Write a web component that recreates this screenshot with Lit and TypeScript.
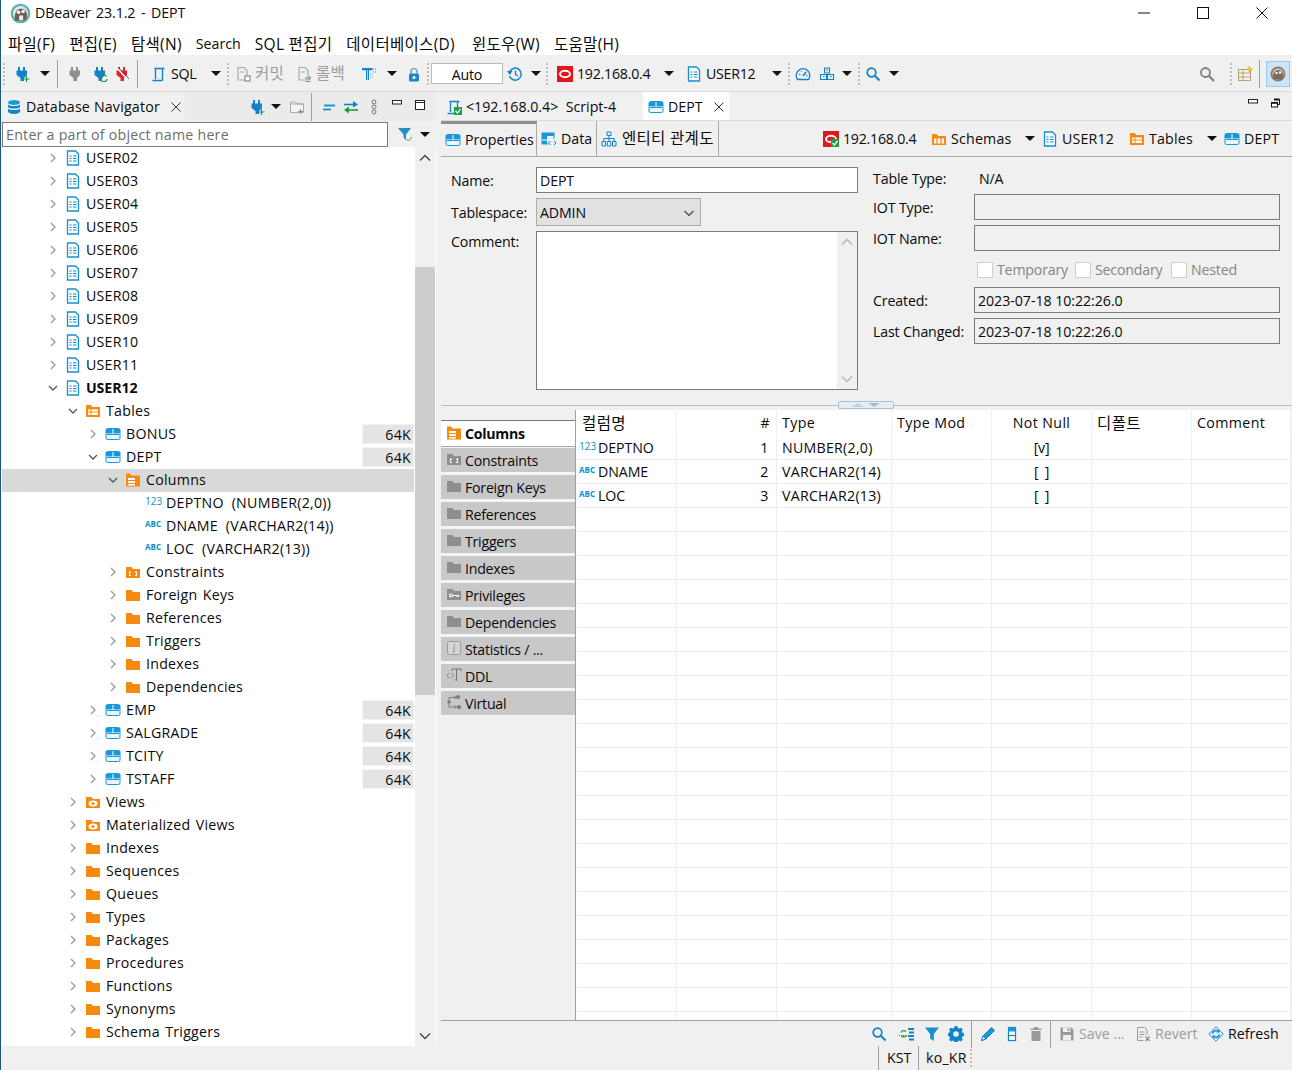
import { LitElement, html, css, svg, nothing } from "lit";
import { customElement } from "lit/decorators.js";

const B = "#1083c9", LB = "#1a97d8", O = "#f58a0f", G = "#1a9e3c", GR = "#8e8e8e", LG = "#a9a9a9";

const plug = (c: string) => svg`<path fill="${c}" d="M4 1h2v3.500h3V1h2v3.500h2V9l-3 3v3H6.500v-3L2.500 9V4.500H4z"/>`;
const ring = (d = "") => svg`<rect x="0" y="0" width="16" height="16" fill="#e2161b"/><ellipse cx="8" cy="8" rx="5" ry="3.200" fill="none" stroke="#fff" stroke-width="2"/>${d ? svg`<rect x="8" y="8" width="8" height="8" fill="#1fa24a"/><path d="M9.500 12l2 2 3-4" fill="none" stroke="#fff" stroke-width="1.300"/>` : nothing}`;
const tableI = svg`<rect x="1" y="2.500" width="14" height="11" rx="1.500" fill="#e8f5fc" stroke="${LB}"/><path fill="${LB}" d="M1 3h14v5H1z"/><path d="M1 8h14M8 3v10" stroke="#fff"/><path d="M1.500 8.500h13" stroke="${LB}"/>`;
const folder = (c: string) => svg`<path fill="${c}" d="M1 3h5.500L8 5h7v9H1z"/>`;
const doc = svg`<path d="M2.500 1h8l3 3v11h-11z" fill="#fff" stroke="#1590d0" stroke-width="1.300"/><path d="M4.500 6h2M4.500 8.500h2M4.500 11h2M8 6h3.500M8 8.500h3.500M8 11h3.500" stroke="${B}" stroke-width="1.100"/>`;
const tablesI = svg`<path fill="${O}" d="M1 2h5l1 2h8v10H1z"/><path d="M3 6.500h10v5.500H3z" fill="#fff"/><path d="M3 9h10M6 6.500V12" stroke="${O}"/>`;
const greyDoc = svg`<path d="M3 1.500h6l3 3V14H3z" fill="none" stroke="${LG}" stroke-width="1.200"/>`;

const ICONS: Record<string, any> = {
  plugAdd: svg`${plug(B)}<path d="M12.500 10v6M9.500 13h6" stroke="${G}" stroke-width="1.200"/>`,
  plugGrey: plug(GR),
  plugSync: svg`${plug(B)}<path d="M9 12a3 3 0 0 1 5.500-1.500M15 13a3 3 0 0 1-5.500 1.500" fill="none" stroke="${G}" stroke-width="1.300"/>`,
  plugRed: svg`${plug("#e3242b")}<path d="M3 2l11 12" stroke="#fff" stroke-width="1.500"/><path d="M4 1l11 12" stroke="#3a3a3a" stroke-width=".8"/>`,
  sql: svg`<path d="M3.500 2.500h10M4.500 2.500V13M11.500 2.500V14.500M1.500 14.500h10" fill="none" stroke="${B}" stroke-width="1.400"/>`,
  sqlOk: svg`<path d="M3.500 2.500h10M4.500 2.500V13M11.500 2.500V14.500M1.500 14.500h10" fill="none" stroke="${B}" stroke-width="1.300"/><rect x="8" y="8" width="8" height="8" fill="#1fa24a"/><path d="M9.500 12l2 2 3-4" fill="none" stroke="#fff" stroke-width="1.200"/>`,
  commit: svg`${greyDoc}<rect x="10" y="10" width="5" height="5" fill="#fff" stroke="#8a8a8a" stroke-width="1.200"/><path d="M5 6h4" stroke="${LG}"/>`,
  rollback: svg`${greyDoc}<path d="M9 12h6M13 10l2 2-2 2M9.500 15.500h5" fill="none" stroke="#8a8a8a"/><path d="M5 6h4" stroke="${LG}"/>`,
  format: svg`<path fill="${B}" d="M2 2h10.500v2.200H9V14H6V4.200H2z"/><path d="M7.500 4v10" stroke="#f0f0f0" stroke-width=".7"/><path d="M13 3h3M13 6h3M10.500 8h2.500M10.500 11h2.500" stroke="${LB}" stroke-dasharray="1 1"/>`,
  lock: svg`<path d="M5 8V5.500a3 3 0 0 1 6 0V8" fill="none" stroke="#8fa3b3" stroke-width="1.600"/><rect x="3" y="7.500" width="10" height="8" rx="1.500" fill="#1f86cc"/><circle cx="8" cy="11.500" r="1.500" fill="#fff"/>`,
  history: svg`<path d="M2.800 5.500A6 6 0 1 1 2.500 10" fill="none" stroke="${B}" stroke-width="1.500"/><path d="M0 5h5.500L2.800 9z" fill="${B}"/><path d="M8.500 4.500V8.500l2.500 1.500" fill="none" stroke="${B}" stroke-width="1.300"/>`,
  oracle: ring(),
  oracleOk: ring("x"),
  doc,
  gauge: svg`<path d="M2.500 13.500a6.800 6.800 0 1 1 11 0z" fill="none" stroke="${B}" stroke-width="1.300"/><path d="M8 10l3-4" stroke="${B}" stroke-width="1.600"/><path d="M4 8.500h1.500M11 9.500h1.500M6 5l.8.800" stroke="${B}"/>`,
  boxes: svg`<path d="M5.500 2h5v5h-5zM1.500 8.500h6v5h-6zM8.500 8.500h6v5h-6zM7 4h2M4 10.500h1.500M11 10.500h1.500" fill="none" stroke="${B}" stroke-width="1.100"/>`,
  search: svg`<circle cx="6.500" cy="6.500" r="4.300" fill="none" stroke="${B}" stroke-width="1.700"/><path d="M9.800 9.800l4.700 4.700" stroke="${B}" stroke-width="2"/>`,
  searchGrey: svg`<circle cx="6.500" cy="6.500" r="4.500" fill="none" stroke="#7f7f7f" stroke-width="1.800"/><path d="M10 10l5 5" stroke="#7f7f7f" stroke-width="2.200"/>`,
  layout: svg`<rect x="1.500" y="3.500" width="12" height="11" fill="#f7f3e8" stroke="#b3a27c"/><path d="M1.500 7h12M6 3.500v11M1.500 11h12" stroke="#b3a27c"/><path d="M12.500 0l1 2.200 2.300 1-2.300 1-1 2.300-1-2.300-2.300-1 2.300-1z" fill="#f2c230" stroke="#d29c10" stroke-width=".4"/>`,
  folderAdd: svg`<path d="M1.500 3h5l1.500 2h6.500v8.500h-13z" fill="#f4f4f4" stroke="${LG}"/><path d="M1.500 5h13" stroke="${LG}"/><path d="M11.500 10v5M9 12.500h5" stroke="${GR}"/>`,
  collapse: svg`<path d="M3 6.500h11" stroke="${LB}" stroke-width="2"/><path d="M2 10.500h8" stroke="${B}" stroke-width="1.600"/>`,
  linkArrows: svg`<path d="M1 5.500h10" stroke="${B}" stroke-width="1.600"/><path d="M10 2l5 3.500-5 3z" fill="${B}"/><path d="M15 11h-10" stroke="${G}" stroke-width="1.600"/><path d="M6 7.500L1 11l5 3.500z" fill="${G}"/>`,
  chain: svg`<circle cx="8" cy="3" r="2" fill="none" stroke="#777"/><circle cx="8" cy="8" r="2" fill="none" stroke="#777"/><circle cx="8" cy="13" r="2" fill="none" stroke="#777"/>`,
  minV: svg`<rect x="3.500" y="1.500" width="9" height="3.500" fill="#fff" stroke="#222"/>`,
  maxV: svg`<rect x="3.500" y="1.500" width="9" height="9" fill="#fff" stroke="#222"/><path d="M3.500 3.500h9" stroke="#222"/>`,
  restore: svg`<path d="M6 1.500h5.500v5H10" fill="none" stroke="#111"/><path d="M6 1.500h5.500" stroke="#111" stroke-width="2"/><rect x="3.500" y="4.500" width="6" height="4.500" fill="#fff" stroke="#111"/><path d="M3.500 5h6" stroke="#111" stroke-width="1.600"/>`,
  funnel: svg`<path fill="#1f8fc4" d="M1 2h13L9 8.500V14L6.500 11.500V8.500z"/><path d="M9.500 13l2 2 3.500-4" fill="none" stroke="#3aa655" stroke-width="1"/>`,
  table: tableI,
  data: svg`<rect x="1" y="2" width="12" height="11" fill="#e8f5fc" stroke="${LB}"/><path d="M1 2h12v3H1zM1 5h5v8H1z" fill="${LB}"/><path d="M1 9h5" stroke="#fff"/><rect x="7" y="8" width="9" height="8" fill="#f0f0f0"/><path d="M9.500 10l-2 2 2 2M13 10l2 2-2 2" fill="none" stroke="${B}"/>`,
  er: svg`<path d="M6 1h4v3.500H6zM1 10.500h3.500V15H1zM6.300 10.500h3.500V15H6.300zM11.500 10.500H15V15h-3.500z" fill="#e8f5fc" stroke="${B}"/><path d="M8 4.500v6M2.800 10.500V7.500h10.400v3" fill="none" stroke="${B}"/>`,
  schemas: svg`<path fill="${O}" d="M1 3h5l1 2h8v9H1z"/><path d="M3 7.500h10v5H3z" fill="#fff"/><path d="M6 7v6M10 7v6" stroke="${O}" stroke-width="1.300"/>`,
  tables: tablesI,
  columns: svg`<path fill="${O}" d="M1 1.500h4l1.500 2H15v11H1z"/><path fill="#fff" d="M3 6h7v2H3zM3 9h7v2H3zM3 12h7v1.500H3z"/>`,
  constraints: svg`${folder(O)}<path d="M6 8H4.500v3.500H6M10 8h1.500v3.500H10" fill="none" stroke="#fff" stroke-width="1.100"/>`,
  folderO: folder(O),
  folderG: folder(GR),
  views: svg`${folder(O)}<ellipse cx="8" cy="9.500" rx="4.500" ry="3" fill="#fff"/><circle cx="8" cy="9.500" r="1.500" fill="${O}"/>`,
  sideCols: svg`<path fill="${O}" d="M1 1.500h4l1.500 2H15v11H1z"/><path fill="#fff" d="M3 6h7v2H3zM3 9h7v2H3zM3 12h7v1.500H3z"/>`,
  sideCons: svg`${folder(GR)}<path d="M6 8H4.500v3.500H6M10 8h1.500v3.500H10" fill="none" stroke="#fff" stroke-width="1.100"/>`,
  sideKey: svg`${folder(GR)}<circle cx="5" cy="9.500" r="1.500" fill="none" stroke="#fff" stroke-width="1.200"/><path d="M6.500 9.500H13M11 9.500V11M12.800 9.500V11" stroke="#fff" stroke-width="1.100"/>`,
  sideInfo: svg`<rect x="1.500" y="1.500" width="13" height="13" rx="2" fill="#d6d6d6" stroke="#9c9c9c"/><path d="M8.700 4v1.500M8.500 7l-1 5M6.500 12h2.500M7 7h1.500" stroke="#9c9c9c" stroke-width="1.200" fill="none"/>`,
  sideDdl: svg`<path d="M3 6L.8 8.500 3 11M5.500 6l2.200 2.500L5.500 11" fill="none" stroke="#777" stroke-width=".9"/><path d="M6 2h9M10.500 2v11M9 13h3M6 2v2M15 2v2" fill="none" stroke="#777"/>`,
  sideVirtual: svg`<circle cx="3" cy="8" r="1.800" fill="#777"/><circle cx="12" cy="3" r="2" fill="#777"/><circle cx="13" cy="13" r="2" fill="#777"/><path d="M3 6V3.500h6M8 2l2 1.500-2 1.500M3 10v3h7M8.500 11.500l2 1.500-2 1.500" fill="none" stroke="#777" stroke-width=".9"/>`,
  compare: svg`<path d="M9 3h6M10 6.500h5M9 10h6M10 13.500h5" stroke="${B}" stroke-width="2"/><path d="M2 6.500a3 3 0 0 1 5-1M7.500 9a3 3 0 0 1-5 1" fill="none" stroke="${G}" stroke-width="1.300"/><path d="M0 9.500h8" stroke="${G}" stroke-dasharray="1 1"/>`,
  filter: svg`<path fill="#1590d0" d="M1 1.500h14L9.800 8v7L6.200 12.500V8z"/>`,
  gear: svg`<path fill="#1083c9" d="M6.500 .5h3l.5 2 1.800.8 1.800-1 2 2-1 1.900.7 1.800 2 .5v3l-2 .5-.7 1.800 1 1.800-2 2-1.800-1-1.800.7-.5 2h-3l-.5-2-1.800-.7-1.800 1-2-2 1-1.800-.7-1.800-2-.5v-3l2-.5.7-1.800-1-1.900 2-2 1.800 1 1.800-.8z" transform="scale(.9) translate(.8 -.4)"/><circle cx="8" cy="8" r="2.800" fill="#f0f0f0"/>`,
  pencil: svg`<path d="M11.500 1.500l3 3L6 13l-4.500 1.500L3 10z" fill="${LB}" stroke="${B}" stroke-linejoin="round"/><path d="M3 10l3 3-4.500 1.500z" fill="#fff" stroke="${B}"/>`,
  rows: svg`<rect x="4.500" y="1.500" width="7" height="13" fill="#fff" stroke="${B}" stroke-width="1.200"/><path d="M4.500 1.500h7v4h-7z" fill="${LB}"/><path d="M4.500 9.500h7" stroke="${B}" stroke-width="1.200"/>`,
  trash: svg`<path fill="#9a9a9a" d="M6 1h4v1.500h3.500V4h-11V2.500H6zM3.500 5h9v10h-9z"/>`,
  save: svg`<path fill="#9a9a9a" d="M1.500 1.500h11l2 2v11h-13z"/><rect x="4" y="1.500" width="7.500" height="4.500" fill="#f0f0f0"/><rect x="8.500" y="2.500" width="2" height="2.500" fill="#9a9a9a"/><rect x="4" y="9" width="8" height="5.500" fill="#f0f0f0"/>`,
  revert: svg`<path d="M2.500 1.500h7l2.500 2.500v5M2.500 1.500v13h6" fill="none" stroke="#9a9a9a"/><path d="M4.500 6h5M4.500 8.500h5M4.500 11h3" stroke="#9a9a9a"/><path d="M10.500 10.500l4 4.500M14.500 10.500l-4 4.500" stroke="#8a8a8a" stroke-width="1.200"/>`,
  refresh: svg`<path d="M8 .8L15.200 8 8 15.200 .8 8z" fill="#dff0fa" stroke="${LB}"/><path d="M4.500 7.500a3.500 3.500 0 0 1 6-1.800M11.500 8.500a3.500 3.500 0 0 1-6 1.800" fill="none" stroke="${B}" stroke-width="1.500"/><path d="M11.500 3.500v3h-3zM4.500 12.500v-3h3z" fill="${B}"/>`,
  beaver: svg`<circle cx="8" cy="8" r="7.500" fill="#5fb0b0"/><circle cx="8" cy="8" r="5.700" fill="#dfe9e8"/><path d="M4 13.500c-1-4 0-8 3-9 4-1 6 2 6 5 0 2-1 3-2 4z" fill="#6b5f56"/><circle cx="6.500" cy="7" r="1.300" fill="#fff"/><circle cx="10" cy="6.500" r="1.300" fill="#fff"/><path d="M7 9.500h3v3.500H7z" fill="#eee"/>`,
  avatar: svg`<circle cx="8" cy="8" r="7.500" fill="#8f7d70"/><circle cx="8" cy="8" r="5.500" fill="#d9cfc6"/><path d="M3.500 13c-1-4 0-8 3.500-8.800 4-.7 6 2 6 5 0 2-1 3.500-2.500 4.500z" fill="#7a6a5e"/><circle cx="6.500" cy="7" r="1.200" fill="#fff"/><circle cx="10" cy="6.500" r="1.200" fill="#fff"/>`,
};

const icon = (n: string) => html`<svg class="ic" viewBox="0 0 16 16" width="16" height="16">${ICONS[n]}</svg>`;
const caret = html`<span class="caret"></span>`;
const grip = html`<span class="grip"></span>`;
const sep = html`<span class="vsep"></span>`;
const slot = (w: number, c: any = nothing) => html`<span class="slot" style="width:${w}px">${c}</span>`;
const btn = (w: number, pad: number, ic: string, t: string, cls = "") =>
  html`<span class="btn ${cls}" style="width:${w}px;padding-left:${pad}px">${icon(ic)}<span>${t}</span></span>`;

type Row = { d: number; t: string; i?: string; a?: "r" | "o" | "n"; k?: boolean; b?: boolean; sel?: boolean; txt?: string };
const user = (n: string): Row => ({ d: 0, t: n, i: "doc", a: "r" });
const fold = (t: string, i = "folderO"): Row => ({ d: 1, t, i, a: "r" });
const tbl = (t: string, o = false): Row => ({ d: 2, t, i: "table", a: o ? "o" : "r", k: true });
const ROWS: Row[] = [
  ...["02", "03", "04", "05", "06", "07", "08", "09", "10", "11"].map((x) => user("USER" + x)),
  { d: 0, t: "USER12", i: "doc", a: "o", b: true },
  { d: 1, t: "Tables", i: "tables", a: "o" },
  tbl("BONUS"), tbl("DEPT", true),
  { d: 3, t: "Columns", i: "columns", a: "o", sel: true },
  { d: 4, t: "DEPTNO (NUMBER(2,0))", txt: "123", a: "n" },
  { d: 4, t: "DNAME (VARCHAR2(14))", txt: "ABC", a: "n" },
  { d: 4, t: "LOC (VARCHAR2(13))", txt: "ABC", a: "n" },
  { d: 3, t: "Constraints", i: "constraints", a: "r" },
  ...["Foreign Keys", "References", "Triggers", "Indexes", "Dependencies"].map((t) => ({ d: 3, t, i: "folderO", a: "r" } as Row)),
  tbl("EMP"), tbl("SALGRADE"), tbl("TCITY"), tbl("TSTAFF"),
  fold("Views", "views"), fold("Materialized Views", "views"),
  ...["Indexes", "Sequences", "Queues", "Types", "Packages", "Procedures", "Functions", "Synonyms", "Schema Triggers"].map((t) => fold(t)),
];

const SIDE = [
  ["sideCons", "Constraints"], ["folderG", "Foreign Keys"], ["folderG", "References"], ["folderG", "Triggers"],
  ["folderG", "Indexes"], ["sideKey", "Privileges"], ["folderG", "Dependencies"], ["sideInfo", "Statistics / ..."],
  ["sideDdl", "DDL"], ["sideVirtual", "Virtual"],
];

const COLS = [
  ["컬럼명", "cjk"], ["#", "r"], ["Type", ""], ["Type Mod", ""], ["Not Null", "c"], ["디폴트", "cjk"], ["Comment", ""],
];
const DATA = [
  ["123", "DEPTNO", "1", "NUMBER(2,0)", "[v]"],
  ["ABC", "DNAME", "2", "VARCHAR2(14)", "[ ]"],
  ["ABC", "LOC", "3", "VARCHAR2(13)", "[ ]"],
];
const MENU = [
  ["파일(F)", "cjk"], ["편집(E)", "cjk"], ["탐색(N)", "cjk"], ["Search", "lat"], ["SQL 편집기", "cjk"],
  ["데이터베이스(D)", "cjk"], ["윈도우(W)", "cjk m3"], ["도움말(H)", "cjk"],
];

@customElement("app-root")
export class AppRoot extends LitElement {
  static styles = css`
    :host { display: block; width: 1292px; height: 1070px; overflow: hidden; }
    * { box-sizing: border-box; }
    .app { width: 1292px; height: 1070px; display: flex; flex-direction: column; background: #f0f0f0; color: #0a0a0a;
      font: 14.2px/1.2 "Open Sans", "Noto Sans CJK KR", sans-serif; letter-spacing: -0.25px; border-left: 1px solid #1f5a78; white-space: nowrap; }
    .ic { flex: none; display: block; }
    .cjk { font-size: 15.5px; letter-spacing: .3px; }
    .lat { letter-spacing: 0; }
    .m3 { margin-left: 3px; }
    .num { letter-spacing: -.25px; }
    .title { height: 29px; flex: none; background: #fff; display: flex; align-items: center; padding: 0 1px 3px 9px; }
    .title .logo { width: 21px; height: 21px; display: block; margin-right: 4px; }
    .title .tx { flex: 1; letter-spacing: -0.1px; word-spacing: 2px; }
    .wc { width: 59px; height: 26px; display: flex; align-items: center; justify-content: center; }
    .wc svg { display: block; }
    .menu { height: 26px; flex: none; background: #fff; display: flex; align-items: center; padding: 4px 0 0 7px; gap: 14px; }
    .toolbar { height: 37px; flex: none; display: flex; align-items: center; border-bottom: 1px solid #dadada; padding-top: 1px; }
    .toolbar .dis span { font-size: 15.5px; letter-spacing: .3px; }
    .slot { flex: none; display: flex; align-items: center; justify-content: center; height: 24px; }
    .btn { flex: none; display: flex; align-items: center; gap: 4px; height: 24px; }
    .btn.dis { color: #9c9c9c; }
    .caret { flex: none; width: 0; height: 0; border-left: 5px solid transparent; border-right: 5px solid transparent; border-top: 5px solid #111; }
    .grip { flex: none; width: 2px; height: 22px; background: repeating-linear-gradient(#bdbdbd 0 2px, transparent 2px 4px); }
    .vsep { flex: none; width: 1px; height: 28px; background: #a0a0a0; display: block; }
    .auto { width: 72px; height: 21px; background: #fff; border: 1px solid #b9b9b9; display: flex; align-items: center; justify-content: center; flex: none; margin-left: 1px; padding-top: 2px; }
    .avatarb { width: 22px; background: #cde4f7; outline: 1px solid #99c9ef; }
    .spring { flex: 1; }
    .main { flex: 1; display: flex; min-height: 0; }
    .left { width: 435px; flex: none; display: flex; flex-direction: column; padding-left: 1px; }
    .phead { height: 29px; flex: none; display: flex; align-items: center; background: #ebebeb; }
    .navtab { width: 183px; height: 29px; background: #f0f0f0; display: flex; align-items: center; gap: 4px; padding-left: 4px; letter-spacing: .2px; }
    .x { margin-left: 7px; display: block; }
    .filter { height: 26px; flex: none; display: flex; align-items: center; }
    .inp { height: 25px; background: #fff; border: 1px solid #7a7a7a; display: flex; align-items: center; padding: 2px 0 0 3px; flex: none; }
    .filter .inp { width: 386px; color: #6d6d6d; letter-spacing: .25px; }
    .treewrap { flex: 1; display: flex; min-height: 0; background: #fff; }
    .tree { width: 412px; flex: none; letter-spacing: .25px; word-spacing: 1.5px; }
    .row { height: 23px; display: flex; align-items: center; position: relative; padding-bottom: 1px; }
    .row.sel { background: #d9d9d9; }
    .row.col { word-spacing: 4px; }
    .row b { font-weight: 700; letter-spacing: -.1px; }
    .arrow { width: 22px; flex: none; display: flex; justify-content: center; padding-right: 2px; }
    .typ { width: 16px; flex: none; font-size: 10px; line-height: 1; color: #0b8fd0; letter-spacing: 0; margin-right: 5px; transform: translateY(-2px); }
    .typ.abc { font-size: 8px; font-weight: 700; }
    .row .ic { margin-right: 5px; }
    .badge { position: absolute; right: 0; top: 1px; width: 52px; height: 20px; background: #e4e4e4; border: 1px solid #f3f3f3; outline: 1px solid #fff; text-align: right; padding-right: 2px; line-height: 19px; }
    .sb { width: 20px; flex: none; margin-left: 1px; background: #f0f0f0; display: flex; flex-direction: column; align-items: center; }
    .sb .chev { height: 21px; display: flex; align-items: center; justify-content: center; flex: none; }
    .sb .gap1 { height: 99px; flex: none; }
    .sb .thumb { width: 100%; height: 428px; background: #cdcdcd; flex: none; }
    .sb .gap2 { flex: 1; }
    .right { flex: 1; min-width: 0; margin-left: 5px; display: flex; flex-direction: column; }
    .etabs { height: 29px; flex: none; display: flex; align-items: stretch; border-bottom: 1px solid #dadada; }
    .etab { display: flex; align-items: center; gap: 4px; padding-top: 1px; letter-spacing: 0; }
    .etab.script { width: 202px; padding-left: 5px; gap: 4px; }
    .etab.on { width: 86px; background: #fff; padding-left: 5px; }
    .emin { margin-left: auto; display: flex; align-items: center; padding-right: 8px; }
    .stabs { height: 36px; flex: none; display: flex; align-items: stretch; border-bottom: 1px solid #a8a8a8; }
    .stab { display: flex; align-items: center; gap: 4px; border-right: 1px solid #a8a8a8; padding-left: 4px; letter-spacing: 0; }
    .stab.p { width: 96px; border-top: 3px solid #8f8f8f; }
    .stab.d { width: 60px; }
    .stab.e { width: 122px; gap: 5px; }
    .crumb { margin-left: auto; display: flex; align-items: center; padding-right: 12px; letter-spacing: .2px; }
    .form { height: 243px; flex: none; display: flex; padding: 10px 0 0 10px; gap: 15px; letter-spacing: -.15px; }
    .fl { width: 407px; flex: none; display: grid; grid-template-columns: 85px 322px; grid-template-rows: 26px 28px 159px; row-gap: 5px; }
    .fl .lab { align-self: center; padding-top: 2px; }
    .fl .lab.top { align-self: start; padding-top: 2px; }
    .in2 { height: 100%; background: #fff; border: 1px solid #7a7a7a; padding: 2px 0 0 3px; display: flex; align-items: center; }
    .selbox { width: 165px; height: 100%; background: #e1e1e1; border: 1px solid #adadad; padding: 2px 6px 0 3px; display: flex; align-items: center; justify-content: space-between; }
    .area { background: #fff; border: 1px solid #7a7a7a; display: flex; justify-content: flex-end; }
    .areasb { width: 20px; background: #f0f0f0; display: flex; flex-direction: column; justify-content: space-between; align-items: center; padding: 6px 0; }
    .fr { width: 407px; display: flex; flex-direction: column; gap: 5px; }
    .frow { display: grid; grid-template-columns: 101px 306px; align-items: center; height: 26px; padding-top: 1px; }
    .frow.tt { height: 22px; }
    .frow.tt span + span { padding-left: 5px; }
    .ro { height: 26px; margin-top: -1px; background: #f0f0f0; border: 1px solid #7a7a7a; padding: 2px 0 0 3px; display: flex; align-items: center; letter-spacing: -.05px; }
    .checks { display: flex; align-items: center; color: #858585; padding-left: 3px; letter-spacing: -.2px; }
    .cb { width: 16px; height: 16px; background: #fff; border: 1px solid #cfcfcf; margin-right: 4px; flex: none; }
    .checks span.l1 { width: 78px; }
    .checks span.l2 { width: 76px; }
    .sash { height: 10px; flex: none; position: relative; }
    .sash::before { content: ""; display: block; position: absolute; left: 0; right: 0; top: 5px; height: 1px; background: #a6c3de; }
    .handle { position: absolute; left: 397px; top: 1px; width: 56px; height: 8px; background: #e8edf2; border: 1px solid #a6c3de; border-radius: 2px; display: flex; align-items: center; justify-content: center; gap: 4px; }
    .tu { width: 0; height: 0; border: 6px solid transparent; border-top: 0; border-bottom: 4px solid #c0cedb; }
    .td { width: 0; height: 0; border: 6px solid transparent; border-bottom: 0; border-top: 4px solid #a9bccd; }
    .lower { flex: 1; min-height: 0; display: flex; overflow: hidden; }
    .side { width: 135px; flex: none; border-right: 1px solid #a0a0a0; padding-top: 10px; display: flex; flex-direction: column; }
    .sh { height: 27px; flex: none; display: flex; align-items: center; padding-left: 5px; gap: 3px; background: #c8c8c8; border-bottom: 2px solid #f4f4f4; border-top: 1px solid #f4f4f4; }
    .sh span { padding-top: 1px; }
    .sh .ic { margin-top: -2px; }
    .sh.on { background: #fff; border-top: 1px solid #777; border-bottom: 1px solid #a8a8a8; font-weight: 700; letter-spacing: -.3px; }
    .gridw { width: 715px; flex: none; padding-left: 1px; background: #fff; overflow: hidden; display: grid; grid-template-columns: 100px 100px 115px 100px 100px 100px 99px; grid-auto-rows: 24px; grid-template-rows: 26px; align-content: start; }
    .th, .td2 { display: flex; align-items: center; border-right: 1px solid #eee; padding: 0 5px; }
    .th { border-right-color: #f0f0f0; letter-spacing: .4px; }
    .th.r { padding-right: 6px; }
    .td2 { border-bottom: 1px solid #eee; padding-top: 1px; }
    .td2.ty { letter-spacing: .25px; }
    .r { justify-content: flex-end; padding-right: 8px; }
    .c { justify-content: center; }
    .nn { word-spacing: 3px; }
    .cell0 { padding-left: 2px; gap: 3px; letter-spacing: -.1px; }
    .typ2 { font-size: 10px; color: #0b8fd0; letter-spacing: 0; line-height: 1; width: 16px; flex: none; transform: translateY(-2px); }
    .typ2.abc { font-size: 8px; font-weight: 700; }
    .btm { height: 26px; flex: none; display: flex; align-items: center; justify-content: flex-end; border-top: 1px solid #a0a0a0; padding-right: 9px; letter-spacing: 0; }
    .status { height: 24px; flex: none; display: flex; align-items: center; padding-left: 877px; }
    .status .vsep { height: 24px; }
    .status .cell { width: 39px; padding-left: 8px; letter-spacing: 0; }
    .status .cell2 { width: 51px; padding-left: 7px; letter-spacing: .2px; }
    .status .grip { height: 18px; }
  `;

  private tree() {
    return ROWS.map((r) => html`<div class="row ${r.sel ? "sel" : ""} ${r.txt ? "col" : ""}" style="padding-left:${41 + r.d * 20}px">
      <span class="arrow">${r.a === "r"
        ? html`<svg width="8" height="10" viewBox="0 0 8 10"><path d="M2 1l4 4-4 4" fill="none" stroke="#9a9a9a" stroke-width="1.300"/></svg>`
        : r.a === "o"
        ? html`<svg width="10" height="8" viewBox="0 0 10 8"><path d="M1 2l4 4 4-4" fill="none" stroke="#555" stroke-width="1.300"/></svg>`
        : nothing}</span>
      ${r.txt ? html`<span class="typ ${r.txt === "ABC" ? "abc" : ""}">${r.txt}</span>` : icon(r.i!)}
      ${r.b ? html`<b>${r.t}</b>` : html`<span>${r.t}</span>`}
      ${r.k ? html`<span class="badge">64K</span>` : nothing}
    </div>`);
  }

  render() {
    const x = html`<svg class="x" width="10" height="10" viewBox="0 0 10 10"><path d="M.5.5l9 9M9.500.5l-9 9" stroke="#333" fill="none"/></svg>`;
    const up = html`<svg width="12" height="8" viewBox="0 0 12 8"><path d="M1 6.500L6 1.500l5 5" fill="none" stroke="#444" stroke-width="1.400"/></svg>`;
    const dn = html`<svg width="12" height="8" viewBox="0 0 12 8"><path d="M1 1.500L6 6.500l5-5" fill="none" stroke="#444" stroke-width="1.400"/></svg>`;
    const upL = html`<svg width="12" height="8" viewBox="0 0 12 8"><path d="M1 6.500L6 1.500l5 5" fill="none" stroke="#b5b5b5" stroke-width="1.400"/></svg>`;
    const dnL = html`<svg width="12" height="8" viewBox="0 0 12 8"><path d="M1 1.500L6 6.500l5-5" fill="none" stroke="#b5b5b5" stroke-width="1.400"/></svg>`;
    return html`<div class="app">
      <div class="title">
        <svg class="logo" viewBox="0 0 16 16">${ICONS.beaver}</svg>
        <span class="tx">DBeaver 23.1.2 - DEPT</span>
        <span class="wc"><svg width="12" height="2"><path d="M0 1h12" stroke="#111"/></svg></span>
        <span class="wc"><svg width="12" height="12"><rect x=".5" y=".5" width="11" height="11" fill="none" stroke="#111"/></svg></span>
        <span class="wc"><svg width="12" height="12"><path d="M.5.5l11 11M11.500.5l-11 11" stroke="#111"/></svg></span>
      </div>
      <div class="menu">${MENU.map(([m, c]) => html`<span class="${c}">${m}</span>`)}</div>
      <div class="toolbar">
        ${slot(5, grip)}${slot(32, icon("plugAdd"))}${slot(14, caret)}${slot(10, sep)}
        ${slot(26, icon("plugGrey"))}${slot(24, icon("plugSync"))}${slot(20, icon("plugRed"))}${slot(10, sep)}
        ${btn(65, 9, "sql", "SQL")}${slot(18, caret)}${slot(6, grip)}
        ${btn(59, 4, "commit", "커밋", "dis")}${btn(60, 6, "rollback", "롤백", "dis")}
        ${slot(36, icon("format"))}${slot(12, caret)}${slot(4)}${slot(24, icon("lock"))}${slot(4, grip)}
        <span class="auto">Auto</span>
        ${slot(24, icon("history"))}${slot(18, caret)}${slot(4, grip)}
        ${btn(111, 8, "oracle", "192.168.0.4")}${slot(18, caret)}
        ${btn(90, 8, "doc", "USER12")}${slot(18, caret)}${slot(6, grip)}
        ${slot(22, icon("gauge"))}${slot(26, icon("boxes"))}${slot(14, caret)}${slot(10, grip)}
        ${slot(18, icon("search"))}${slot(24, caret)}
        <span class="spring"></span>
        ${slot(24, icon("searchGrey"))}${slot(4)}${slot(16, grip)}${slot(12, icon("layout"))}${slot(16, sep)}
        <span class="slot avatarb">${icon("avatar")}</span>${slot(3)}
      </div>
      <div class="main">
        <div class="left">
          <div class="phead">
            <span class="navtab"><svg class="ic" viewBox="0 0 16 16" width="16" height="16"><ellipse cx="8" cy="3.500" rx="6" ry="2.500" fill="${LB}"/><path d="M2 5.500c2 2 10 2 12 0V8c-2 2-10 2-12 0zM2 9.500c2 2 10 2 12 0V13c-2 2.500-10 2.500-12 0z" fill="${B}"/></svg><span>Database Navigator</span>${x}</span>
            ${slot(64)}${slot(16, icon("plugAdd"))}${slot(22, caret)}${slot(2)}${slot(16, icon("folderAdd"))}${slot(6)}${slot(1, sep)}${slot(8)}
            ${slot(18, icon("collapse"))}${slot(26, icon("linkArrows"))}${slot(20, icon("chain"))}${slot(26, icon("minV"))}${slot(20, icon("maxV"))}
          </div>
          <div class="filter">
            <span class="inp">Enter a part of object name here</span>
            ${slot(34, icon("funnel"))}${slot(6, caret)}
          </div>
          <div class="treewrap">
            <div class="tree">${this.tree()}</div>
            <div class="sb">
              <span class="chev">${up}</span><span class="gap1"></span><span class="thumb"></span><span class="gap2"></span><span class="chev">${dn}</span>
            </div>
          </div>
        </div>
        <div class="right">
          <div class="etabs">
            <span class="etab script">${icon("sqlOk")}<span>&lt;192.168.0.4&gt;&nbsp; Script-4</span></span>
            <span class="etab on">${icon("table")}<span>DEPT</span>${x}</span>
            <span class="emin">${icon("minV")}${slot(7)}${icon("restore")}</span>
          </div>
          <div class="stabs">
            <span class="stab p">${icon("table")}<span>Properties</span></span>
            <span class="stab d">${icon("data")}<span>Data</span></span>
            <span class="stab e">${icon("er")}<span class="cjk">엔티티 관계도</span></span>
            <span class="crumb">
              ${btn(108, 0, "oracleOk", "192.168.0.4", "num")}
              ${btn(89, 0, "schemas", "Schemas")}${slot(20, caret)}
              ${btn(89, 2, "doc", "USER12")}
              ${btn(73, 0, "tables", "Tables")}${slot(20, caret)}
              ${btn(58, 2, "table", "DEPT")}
            </span>
          </div>
          <div class="form">
            <div class="fl">
              <span class="lab">Name:</span><span class="in2">DEPT</span>
              <span class="lab">Tablespace:</span><span class="selbox">ADMIN <svg width="10" height="7" viewBox="0 0 10 7"><path d="M.5 1l4.500 4.500L9.500 1" fill="none" stroke="#444" stroke-width="1.200"/></svg></span>
              <span class="lab top">Comment:</span>
              <span class="area"><span class="areasb">${upL}${dnL}</span></span>
            </div>
            <div class="fr">
              <div class="frow tt"><span>Table Type:</span><span>N/A</span></div>
              <div class="frow"><span>IOT Type:</span><span class="ro"></span></div>
              <div class="frow"><span>IOT Name:</span><span class="ro"></span></div>
              <div class="frow"><span></span><span class="checks"><span class="cb"></span><span class="l1">Temporary</span><span class="cb"></span><span class="l2">Secondary</span><span class="cb"></span><span>Nested</span></span></div>
              <div class="frow"><span>Created:</span><span class="ro">2023-07-18 10:22:26.0</span></div>
              <div class="frow"><span>Last Changed:</span><span class="ro">2023-07-18 10:22:26.0</span></div>
            </div>
          </div>
          <div class="sash"><span class="handle"><span class="tu"></span><span class="td"></span></span></div>
          <div class="lower">
            <div class="side">
              <div class="sh on">${icon("sideCols")}<span>Columns</span></div>
              ${SIDE.map(([i, t]) => html`<div class="sh">${icon(i)}<span>${t}</span></div>`)}
            </div>
            <div class="gridw">
              ${COLS.map(([t, a]) => html`<div class="th ${a}">${t}</div>`)}
              ${DATA.map((d) => html`
                <div class="td2 cell0"><span class="typ2 ${d[0] === "ABC" ? "abc" : ""}">${d[0]}</span>${d[1]}</div>
                <div class="td2 r">${d[2]}</div>
                <div class="td2 ty">${d[3]}</div>
                <div class="td2"></div>
                <div class="td2 c nn">${d[4]}</div>
                <div class="td2"></div>
                <div class="td2"></div>`)}
              ${Array.from({ length: 22 * 7 }, () => html`<div class="td2"></div>`)}
            </div>
          </div>
          <div class="btm">
            ${slot(26, icon("search"))}${slot(30, icon("compare"))}${slot(20, icon("filter"))}${slot(28, icon("gear"))}${slot(2, sep)}
            ${slot(32, icon("pencil"))}${slot(16, icon("rows"))}${slot(3)}${slot(26, icon("trash"))}${slot(2, sep)}
            ${btn(74, 8, "save", "Save ...", "dis")}${btn(75, 10, "revert", "Revert", "dis")}
            ${btn(83, 8, "refresh", "Refresh")}
          </div>
        </div>
      </div>
      <div class="status">
        ${sep}<span class="cell">KST</span>${sep}<span class="cell2">ko_KR</span>${grip}
      </div>
    </div>`;
  }
}
